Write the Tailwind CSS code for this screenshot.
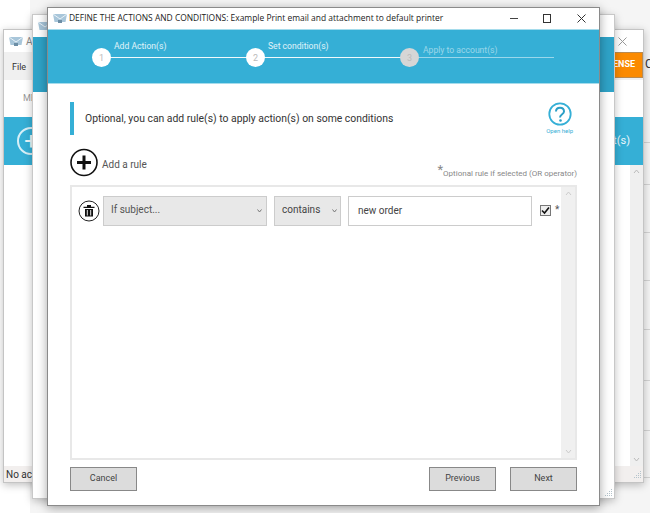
<!DOCTYPE html>
<html lang="en">
<head>
  <meta charset="UTF-8" />
  <title>Define the actions and conditions</title>
  <script src="https://cdn.jsdelivr.net/npm/@tailwindcss/browser@4"></script>
</head>
<body class="relative w-[650px] h-[513px] overflow-hidden bg-white font-['Roboto',sans-serif] text-[#444]">

  <!-- window furthest back -->
  <div class="absolute left-[30px] top-0 w-[620px] h-[513px] bg-[#f5f5f5]">
    <div class="absolute left-[614px] top-[142px] w-[6px] border-t border-[#d4d4d4]"></div>
    <div class="absolute left-[614px] top-[184px] w-[6px] border-t border-[#d4d4d4]"></div>
    <div class="absolute left-[614px] top-[232px] w-[6px] border-t border-[#d4d4d4]"></div>
    <div class="absolute left-[614px] top-[280px] w-[6px] border-t border-[#d4d4d4]"></div>
    <div class="absolute left-[614px] top-[329px] w-[6px] border-t border-[#d4d4d4]"></div>
    <div class="absolute left-[614px] top-[380px] w-[6px] border-t border-[#d4d4d4]"></div>
    <div class="absolute left-[614px] top-[430px] w-[6px] border-t border-[#d4d4d4]"></div>
    <div class="absolute left-[614px] top-[477px] w-[6px] border-t border-[#d4d4d4]"></div>
    <div class="absolute left-[615px] top-[55px] text-[12px] text-[#333]">C</div>
  </div>

  <!-- main application window -->
  <div class="absolute left-[3px] top-[29px] w-[641px] h-[454px] bg-white border border-[#c4c4c4] shadow-[0_2px_8px_rgba(0,0,0,0.25)] flex flex-col">
    <div class="h-[22px] flex items-center px-[5px] text-[10px] text-[#888]">
      <svg class="w-[14px] h-[11px] mr-[3px]" viewBox="0 0 14 11"><path d="M0 1 H14 L12.5 9 H1.5 Z" fill="#a8c6da"/><path d="M0 1 L7 6 L14 1" fill="none" stroke="#e8f1f7"/><path d="M5 7 H9 V10 H5 Z" fill="#6d8ea5"/></svg>
      <span>AI</span>
      <svg class="ml-auto mr-[11px] w-[9px] h-[9px]" viewBox="0 0 9 9"><path d="M0.5 0.5 L8.5 8.5 M8.5 0.5 L0.5 8.5" stroke="#999"/></svg>
    </div>
    <div class="h-[28px] flex items-start justify-between bg-[#f0f0f0] pl-[8px] text-[9px] text-[#333]">
      <span class="mt-[9px]">File</span>
      <span class="w-[40px] h-[26px] flex items-center justify-end pr-[7px] bg-[#fb8a00] text-white font-bold text-[9px] border border-[#b98a50]">ENSE</span>
    </div>
    <div class="h-[37px] pl-[19px] pt-[12px] text-[9px] text-[#999]">ME</div>
    <div class="h-[48px] bg-[#35afd6] relative flex items-center justify-end pr-[13px] text-[11px] text-white/90">
      <span class="absolute left-[13px] top-[10px] w-[28px] h-[28px] rounded-full border-2 border-white/80 flex items-center justify-center text-[24px] leading-none">+</span>
      <span>nt(s)</span>
    </div>
    <div class="flex-1 flex justify-end">
      <div class="w-[13px] bg-[#efefef] flex flex-col items-center justify-between py-[4px] text-[#bbb]">
        <svg class="w-[7px] h-[5px]" viewBox="0 0 7 5"><path d="M1 4 L3.5 1 L6 4" fill="none" stroke="currentColor"/></svg>
        <svg class="w-[7px] h-[5px]" viewBox="0 0 7 5"><path d="M1 1 L3.5 4 L6 1" fill="none" stroke="currentColor"/></svg>
      </div>
    </div>
    <div class="h-[16px] bg-[#f2efee] pl-[2px] flex items-center justify-between text-[10px] text-[#333]">
      <span>No accounts</span>
      <svg class="w-[9px] h-[9px] mr-[1px]" viewBox="0 0 9 9"><path d="M7 1 H8 V2 H7 Z M5 3 H6 V4 H5 Z M7 3 H8 V4 H7 Z M3 5 H4 V6 H3 Z M5 5 H6 V6 H5 Z M7 5 H8 V6 H7 Z M1 7 H2 V8 H1 Z M3 7 H4 V8 H3 Z M5 7 H6 V8 H5 Z M7 7 H8 V8 H7 Z" fill="#b5c4cc"/></svg>
    </div>
  </div>

  <!-- second window -->
  <div class="absolute left-[32px] top-[14px] w-[583px] h-[485px] bg-white border border-[#c8c8c8] shadow-[0_2px_8px_rgba(0,0,0,0.25)] flex flex-col">
    <div class="h-[22px] pl-[5px] pt-[6px]">
      <svg class="w-[14px] h-[11px]" viewBox="0 0 14 11"><path d="M0 1 H14 L12.5 9 H1.5 Z" fill="#a8c6da"/><path d="M0 1 L7 6 L14 1" fill="none" stroke="#e8f1f7"/></svg>
    </div>
    <div class="h-[55px] bg-[#2fa3c8]"></div>
    <div class="flex-1 flex items-end justify-end pr-[1px] pb-[1px]">
      <svg class="w-[9px] h-[9px]" viewBox="0 0 9 9"><path d="M7 1 H8 V2 H7 Z M5 3 H6 V4 H5 Z M7 3 H8 V4 H7 Z M3 5 H4 V6 H3 Z M5 5 H6 V6 H5 Z M7 5 H8 V6 H7 Z M1 7 H2 V8 H1 Z M3 7 H4 V8 H3 Z M5 7 H6 V8 H5 Z M7 7 H8 V8 H7 Z" fill="#b5c4cc"/></svg>
    </div>
  </div>

  <!-- active dialog -->
  <div class="absolute left-[47px] top-[7px] w-[553px] h-[499px] bg-white border border-[#8a8a8a] shadow-[0_2px_10px_rgba(0,0,0,0.35)] flex flex-col">

    <div class="h-[21px] flex items-center pl-[5px] text-[#222]">
      <svg class="w-[14px] h-[11px] mr-[2px]" viewBox="0 0 14 11"><path d="M0 1 H14 L12.5 9 H1.5 Z" fill="#a8c6da"/><path d="M0 1 L7 6 L14 1" fill="none" stroke="#e8f1f7"/><path d="M5 7 H9 V10 H5 Z" fill="#6d8ea5"/></svg>
      <span class="text-[8.45px] font-['Open_Sans',sans-serif] whitespace-nowrap">DEFINE THE ACTIONS AND CONDITIONS: Example Print email and attachment to default printer</span>
      <div class="ml-auto mr-[13px] flex items-center">
        <svg class="w-[8px] h-[9px]" viewBox="0 0 8 9"><path d="M0 4.5 H8" stroke="#444"/></svg>
        <svg class="ml-[25px] w-[8px] h-[9px]" viewBox="0 0 8 9"><rect x="0.5" y="0.5" width="7" height="8" fill="none" stroke="#333"/></svg>
        <svg class="ml-[26px] w-[9px] h-[9px]" viewBox="0 0 9 9"><path d="M0.5 0.5 L8.5 8.5 M8.5 0.5 L0.5 8.5" stroke="#333"/></svg>
      </div>
    </div>

    <!-- wizard steps -->
    <div class="h-[55px] bg-[#35afd6] border-t border-b border-[#a5dcec] relative text-[8.6px] leading-[10px] text-white/85">
      <div class="absolute left-[53px] right-[45px] top-[27px] h-[1px] bg-white/50"></div>
      <div class="absolute left-[53px] w-[308px] top-[27px] h-[1px] bg-white/85"></div>
      <span class="absolute left-[44px] top-[18px] w-[19px] h-[19px] rounded-full bg-white text-[#bbb] flex items-center justify-center text-[9px]">1</span>
      <span class="absolute left-[198px] top-[18px] w-[19px] h-[19px] rounded-full bg-white text-[#bbb] flex items-center justify-center text-[9px]">2</span>
      <span class="absolute left-[352px] top-[18px] w-[19px] h-[19px] rounded-full bg-[#d6d6d6] text-[#bbb] flex items-center justify-center text-[9px]">3</span>
      <span class="absolute left-[66px] top-[11px]">Add Action(s)</span>
      <span class="absolute left-[220px] top-[11px]">Set condition(s)</span>
      <span class="absolute left-[375px] top-[15px] text-white/50">Apply to account(s)</span>
    </div>

    <div class="flex-1 flex flex-col px-[22px]">
      <div class="mt-[18px] h-[33px] border-l-4 border-[#35afd6] pl-[11px] pr-[4px] flex items-center justify-between">
        <span class="text-[10.4px] text-[#333]">Optional, you can add rule(s) to apply action(s) on some conditions</span>
        <div class="flex flex-col items-center self-start text-[#35afd6]">
          <svg class="w-[24px] h-[24px]" viewBox="0 0 24 24"><circle cx="12" cy="12" r="10.7" fill="none" stroke="currentColor" stroke-width="1.8"/><path d="M8 9.5 C8 4.5 16 4.5 16 9.5 C16 12.5 12 12 12 15.5" fill="none" stroke="#2b9fc6" stroke-width="2"/><circle cx="12.5" cy="18.5" r="1.3" fill="#2b9fc6"/></svg>
          <span class="text-[6px] leading-[8px] mt-[1px]">Open help</span>
        </div>
      </div>

      <div class="h-[50px] flex items-start">
        <div class="mt-[13px] flex items-center gap-[4px]">
          <svg class="w-[28px] h-[29px]" viewBox="0 0 28 28"><circle cx="14" cy="14" r="13" fill="none" stroke="#111" stroke-width="1.6"/><path d="M7 14 H21 M14 7 V21" stroke="#111" stroke-width="3"/></svg>
          <span class="mt-[3px] text-[10px] text-[#555]">Add a rule</span>
        </div>
        <div class="ml-auto mt-[29px] flex items-start text-[8px] text-[#888] whitespace-nowrap">
          <span class="text-[13px] leading-[12px]">*</span><span class="mt-[5px] leading-[10px]">Optional rule if selected (OR operator)</span>
        </div>
      </div>

      <!-- rule list -->
      <div class="h-[275px] border-2 border-[#e8e8e8] flex">
        <div class="flex-1 pt-[9px] pl-[6px] flex items-start">
          <svg class="w-[22px] h-[22px] mt-[4px]" viewBox="0 0 22 22"><circle cx="11" cy="11" r="10" fill="none" stroke="#222"/><path d="M5.5 6.8 H16.5 V8 H5.5 Z M9 5 H13 V6.8 H9 Z M7 9 H15 V16.5 H7 Z" fill="#111"/><path d="M9.3 10 V15.5 M12.7 10 V15.5" stroke="#fff" stroke-width="0.9"/></svg>
          <div class="ml-[3px] w-[164px] h-[30px] bg-[#e8e8e8] border border-[#ccc] flex items-center justify-between pl-[7px] pr-[4px] pb-[3px] text-[10px] text-[#555]">
            <span>If subject...</span>
            <svg class="w-[5px] h-[4px] mt-[3px]" viewBox="0 0 5 4"><path d="M0.5 0.5 L2.5 3 L4.5 0.5" fill="none" stroke="#777"/></svg>
          </div>
          <div class="ml-[7px] w-[67px] h-[30px] bg-[#e8e8e8] border border-[#ccc] flex items-center justify-between pl-[7px] pr-[3px] pb-[3px] text-[10px] text-[#444]">
            <span>contains</span>
            <svg class="w-[5px] h-[4px] mt-[3px]" viewBox="0 0 5 4"><path d="M0.5 0.5 L2.5 3 L4.5 0.5" fill="none" stroke="#777"/></svg>
          </div>
          <div class="ml-[7px] w-[184px] h-[30px] bg-white border border-[#ccc] flex items-center pl-[9px] pb-[1px] text-[10px] text-[#444]">new order</div>
          <div class="ml-[8px] mt-[9px] w-[11px] h-[11px] bg-[#eee] border border-[#777] flex items-center justify-center">
            <svg class="w-[9px] h-[9px]" viewBox="0 0 9 9"><path d="M1 4.5 L3.5 7 L8 1.5" fill="none" stroke="#111" stroke-width="1.6"/></svg>
          </div>
          <span class="ml-[4px] mt-[6px] text-[10px] text-[#555]">*</span>
        </div>
        <div class="w-[14px] bg-[#f0f0f0] flex flex-col items-center justify-between py-[4px]">
          <svg class="w-[7px] h-[5px]" viewBox="0 0 7 5"><path d="M1 4 L3.5 1 L6 4" fill="none" stroke="#ccc"/></svg>
          <svg class="w-[7px] h-[5px]" viewBox="0 0 7 5"><path d="M1 1 L3.5 4 L6 1" fill="none" stroke="#ccc"/></svg>
        </div>
      </div>

      <div class="mt-[7px] flex text-[9px] text-[#444]">
        <button class="w-[67px] h-[24px] bg-[#dcdcdc] border border-[#888]">Cancel</button>
        <button class="ml-auto w-[67px] h-[24px] bg-[#dcdcdc] border border-[#888]">Previous</button>
        <button class="ml-[14px] w-[67px] h-[24px] bg-[#dcdcdc] border border-[#888]">Next</button>
      </div>
    </div>
  </div>
</body>
</html>
